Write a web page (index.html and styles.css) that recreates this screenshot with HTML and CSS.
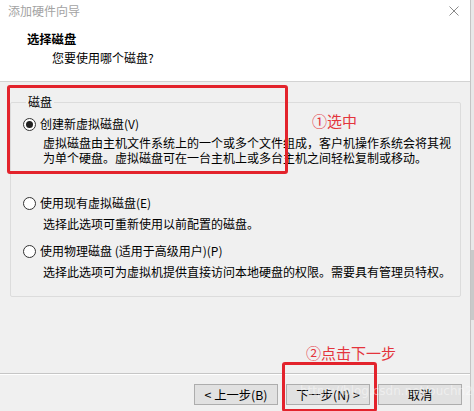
FILE: index.html
```html
<!DOCTYPE html>
<html lang="zh-CN">
<head>
  <meta charset="UTF-8">
  <title>添加硬件向导</title>
  <link rel="stylesheet" href="styles.css">
</head>
<body>
  <div class="window">
    <!-- Header -->
    <div class="header">
      <div class="titlebar">
        <span class="title">添加硬件向导</span>
        <svg class="close" width="10" height="10" viewBox="0 0 10 10">
          <path d="M0.5 0.5 L9.5 9.5 M9.5 0.5 L0.5 9.5" stroke="#8a8a8a" stroke-width="1" fill="none"/>
        </svg>
      </div>
      <h1 class="heading">选择磁盘</h1>
      <p class="subheading">您要使用哪个磁盘?</p>
    </div>

    <!-- Content -->
    <div class="content">
      <fieldset class="group">
        <legend>磁盘</legend>

        <div class="option">
          <div class="radio-row"><span class="radio checked"></span>创建新虚拟磁盘(V)</div>
          <p class="desc tall">虚拟磁盘由主机文件系统上的一个或多个文件组成，客户机操作系统会将其视为单个硬盘。虚拟磁盘可在一台主机上或多台主机之间轻松复制或移动。</p>
        </div>

        <div class="option">
          <div class="radio-row"><span class="radio"></span>使用现有虚拟磁盘(E)</div>
          <p class="desc">选择此选项可重新使用以前配置的磁盘。</p>
        </div>

        <div class="option">
          <div class="radio-row"><span class="radio"></span>使用物理磁盘 (适用于高级用户)(P)</div>
          <p class="desc">选择此选项可为虚拟机提供直接访问本地硬盘的权限。需要具有管理员特权。</p>
        </div>
      </fieldset>
    </div>

    <!-- Footer -->
    <div class="footer">
      <button class="btn">&lt; 上一步(B)</button>
      <button class="btn">下一步(N) &gt;</button>
      <button class="btn">取消</button>
    </div>
  </div>
  <div class="edge"></div>

  <!-- Annotations -->
  <div class="mark mark-one"></div>
  <span class="note note-one">①选中</span>
  <div class="mark mark-two"></div>
  <span class="note note-two">②点击下一步</span>
  <span class="watermark">https://blog.csdn.net/ouchn2014</span>
</body>
</html>
```

FILE: styles.css
```css
body {
  margin: 0;
  width: 474px;
  height: 411px;
  overflow: hidden;
  position: relative;
  display: flex;
  background: #e6e6e6;
  font-family: "Microsoft YaHei", "Noto Sans CJK SC", sans-serif;
  font-size: 12px;
  color: #000;
}

.window {
  width: 470px;
  height: 411px;
  display: flex;
  flex-direction: column;
  background: #f0f0f0;
  border-right: 1px solid #c4c4c4;
}

.edge {
  flex: 1;
  background: linear-gradient(#e8e8e8 0, #e8e8e8 250px, #c9c9c9 250px, #c9c9c9 320px, #e8e8e8 320px);
}

.header {
  height: 81px;
  background: #fff;
  border-bottom: 1px solid #d3d3d3;
}

.titlebar {
  height: 22px;
  display: flex;
  align-items: center;
  justify-content: space-between;
  padding: 0 11px 0 8px;
}

.title {
  color: #a3a3a3;
  font-size: 12px;
  line-height: 14px;
}

.heading {
  margin: 9px 0 0 27px;
  font-size: 12.3px;
  font-weight: bold;
  line-height: 16px;
}

.subheading {
  margin: 3px 0 0 52px;
  line-height: 16px;
}

.content {
  flex: 1;
  padding: 12px 9px 0 10px;
}

.group {
  margin: 0;
  padding: 6px 4px 10px 12px;
  height: 185px;
  border: 1px solid #dcdcdc;
  border-radius: 2px;
}

.group legend {
  padding: 0 2px;
  margin-left: 3px;
  line-height: 16px;
}

.option {
  margin-bottom: 12px;
}

.radio-row {
  display: flex;
  align-items: center;
  line-height: 16px;
}

.radio {
  width: 11px;
  height: 11px;
  border: 1px solid #333;
  border-radius: 50%;
  background: #fff;
  margin-right: 4px;
  position: relative;
}

.radio.checked::after {
  content: "";
  position: absolute;
  left: 2px;
  top: 2px;
  width: 7px;
  height: 7px;
  border-radius: 50%;
  background: #222;
}

.desc {
  margin: 5px 0 0 20px;
  line-height: 15px;
}

.desc.tall {
  margin-top: 3px;
  padding-bottom: 18px;
}

.footer {
  height: 38px;
  border-top: 1px solid #c6c6c6;
  box-shadow: inset 0 1px 0 #fff;
  display: flex;
  justify-content: flex-end;
  align-items: flex-start;
  gap: 8px;
  padding: 10px 8px 0 0;
  box-sizing: border-box;
}

.btn {
  width: 84px;
  height: 21px;
  padding: 0;
  background: #e1e1e1;
  border: 1px solid #adadad;
  font-family: inherit;
  font-size: 12.3px;
  color: #000;
}

.mark {
  position: absolute;
  border: 3px solid #e3232c;
  border-radius: 3px;
}

.mark-one {
  left: 7px;
  top: 85px;
  width: 275px;
  height: 83px;
}

.mark-two {
  left: 282px;
  top: 362px;
  width: 89px;
  height: 44px;
}

.note {
  position: absolute;
  color: #e4343c;
  font-size: 15px;
  line-height: 18px;
}

.note-one {
  left: 312px;
  top: 112px;
}

.note-two {
  left: 306px;
  top: 344px;
}

.watermark {
  position: absolute;
  left: 300px;
  top: 384px;
  font-family: "DejaVu Sans", sans-serif;
  font-size: 12px;
  color: rgba(255, 255, 255, 0.45);
}
```
